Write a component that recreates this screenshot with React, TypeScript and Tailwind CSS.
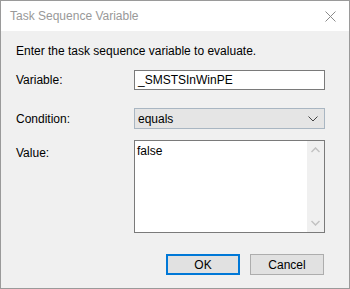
export default function App() {
  const font = { fontFamily: '"Liberation Sans", Arial, sans-serif' };
  return (
    <div
      className="w-[350px] h-[289px] border border-[#9a9a9a] bg-[#f0f0f0] flex flex-col text-[12px] text-black"
      style={font}
    >
      {/* title bar */}
      <div className="h-[30px] bg-white flex items-center justify-between pl-[9px] pr-[13px] shrink-0">
        <span className="text-[#999999] text-[12px]">Task Sequence Variable</span>
        <svg width="11" height="11" viewBox="0 0 11 11" className="shrink-0">
          <path d="M0.5 0.5 L10.5 10.5 M10.5 0.5 L0.5 10.5" stroke="#8a8a8a" strokeWidth="1" fill="none" />
        </svg>
      </div>

      <div className="flex flex-col pl-[15px] pr-[24px] pt-[13px]">
        <div className="leading-[15px]">Enter the task sequence variable to evaluate.</div>

        <div className="flex items-center mt-[11px]">
          <span className="w-[118px] shrink-0">Variable:</span>
          <div className="flex-1 h-[20px] bg-white border border-[#7a7a7a] flex items-center px-[3px]">
            _SMSTSInWinPE
          </div>
        </div>

        <div className="flex items-center mt-[18px]">
          <span className="w-[118px] shrink-0">Condition:</span>
          <div className="flex-1 h-[21px] bg-[#e5e5e5] border border-[#a9b6c2] flex items-center justify-between pl-[3px] pr-[6px]">
            <span>equals</span>
            <svg width="10" height="6" viewBox="0 0 10 6">
              <path d="M0.5 0.5 L5 5 L9.5 0.5" stroke="#444" strokeWidth="1" fill="none" />
            </svg>
          </div>
        </div>

        <div className="flex items-start mt-[11px]">
          <span className="w-[118px] shrink-0 pt-[4px]">Value:</span>
          <div className="flex-1 h-[93px] bg-white border border-[#7a7a7a] flex">
            <div className="flex-1 px-[2px] pt-[3px] leading-[15px]">false</div>
            <div className="w-[17px] bg-[#f0f0f0] flex flex-col items-center justify-between py-[6px]">
              <svg width="9" height="6" viewBox="0 0 9 6">
                <path d="M0.5 5 L4.5 1 L8.5 5" stroke="#c2c2c2" strokeWidth="1.5" fill="none" />
              </svg>
              <svg width="9" height="6" viewBox="0 0 9 6">
                <path d="M0.5 1 L4.5 5 L8.5 1" stroke="#c2c2c2" strokeWidth="1.5" fill="none" />
              </svg>
            </div>
          </div>
        </div>

        <div className="flex justify-end gap-[10px] mt-[21px] mr-[1px]">
          <button className="w-[74px] h-[21px] bg-[#e1e1e1] border-2 border-[#0078d7] flex items-center justify-center">
            OK
          </button>
          <button className="w-[74px] h-[21px] bg-[#e1e1e1] border border-[#adadad] flex items-center justify-center">
            Cancel
          </button>
        </div>
      </div>
    </div>
  );
}
